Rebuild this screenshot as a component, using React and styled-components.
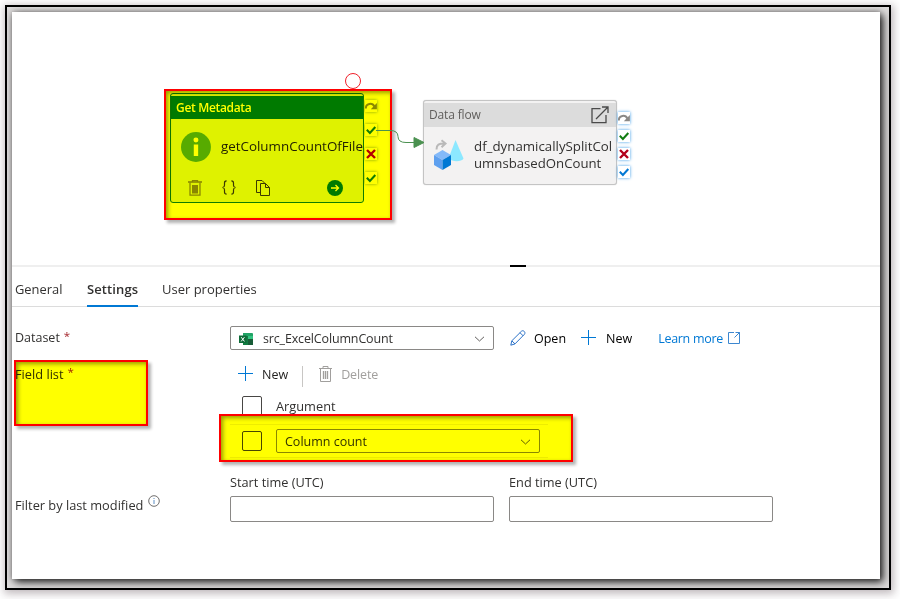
import React from "react";
import styled, { createGlobalStyle, css } from "styled-components";

const Global = createGlobalStyle`
  * { box-sizing: border-box; }
  body { margin: 0; background: #fff; font-family: "Open Sans", "Noto Sans", sans-serif; overflow: hidden; }
`;

const Stage = styled.div`
  width: 900px; height: 599px; padding: 5px 9px 9px 5px; background: #fff;
`;
const Frame = styled.div`
  width: 886px; height: 585px; border: 2px solid #000; padding: 5px; background: #dddbdb;
  box-shadow: 1px 2px 8px 2px rgba(60, 40, 50, .3);
`;
const Page = styled.main`
  position: relative; width: 868px; height: 567px; background: #fff;
  display: flex; flex-direction: column;
  box-shadow: 3px 3px 8px rgba(0, 0, 0, .85), 0 0 5px rgba(0, 0, 0, .3);
`;
const Canvas = styled.section`
  position: relative; height: 253px; flex: none;
`;
const Text = styled.span`
  display: inline-block; white-space: nowrap; flex: none;
  font-size: ${(p) => p.$size || 12.5}px;
  font-weight: ${(p) => p.$weight || 400};
  letter-spacing: ${(p) => p.$ls || 0}px;
  color: ${(p) => p.$color || "#323130"};
  line-height: 18px;
`;
const Node = styled.article`
  position: absolute; border-radius: 3px; width: 194px;
  ${(p) => p.$active
    ? css`left: 158px; top: 81px; height: 110px; border: 1px solid #107c10; background: #dff2df; padding-top: 2px;`
    : css`left: 411px; top: 88px; height: 85px; border: 1px solid #c4c4c4; background: #f3f2f2; padding-top: 2px; box-shadow: 0 0 1px #bbb;`}
`;
const NodeHeader = styled.header`
  height: ${(p) => (p.$active ? 23 : 24)}px; display: flex; align-items: center; justify-content: space-between;
  padding: 0 7px 0 5px; background: ${(p) => (p.$active ? "#007a10" : "#dcdcdc")};
`;
const NodeBody = styled.div`
  display: flex; align-items: center; padding-left: 10px; gap: 10px;
  height: ${(p) => (p.$active ? 55 : 56)}px;
`;
const NodeTitle = styled.div`
  display: flex; flex-direction: column;
  & > span { line-height: 17px; }
`;
const NodeActions = styled.div`
  display: flex; align-items: center; height: 27px; padding: 0 20px 0 17px;
  & > svg + svg { margin-left: 20px; }
  & > svg:last-child { margin-left: auto; }
`;
const Ports = styled.div`
  position: absolute; display: grid; gap: ${(p) => p.$gap}px;
  left: ${(p) => p.$x}px; top: ${(p) => p.$y}px;
`;
const Port = styled.div`
  width: 12px; height: 12px; background: #fff; display: grid; place-items: center;
  box-shadow: 0 0 3px ${(p) => p.$glow};
  svg { display: block; }
`;
const Wire = styled.svg`
  position: absolute; left: 364px; top: 106px;
`;
const Marker = styled.div`
  position: absolute; left: 333px; top: 61px; width: 16px; height: 16px; border: 1px solid #f0202a; border-radius: 50%;
`;
const Highlight = styled.div`
  position: absolute; pointer-events: none;
  left: ${(p) => p.$x}px; top: ${(p) => p.$y}px; width: ${(p) => p.$w}px; height: ${(p) => p.$h}px;
  border: 2px solid #f00; box-shadow: 3px 3px 3px rgba(0, 0, 0, .3);
  &::before {
    content: ""; position: absolute; inset: 0; background: #ff0; mix-blend-mode: multiply;
  }
  &::after {
    content: ""; position: absolute; inset: 0; box-shadow: inset 2px 2px 4px rgba(0, 0, 0, .4);
  }
`;
const Splitter = styled.div`
  height: 2px; background: #efefef; flex: none; padding-left: 498px;
  &::before { content: ""; display: block; width: 16px; height: 2px; background: #000; }
`;
const Tabs = styled.nav`
  height: 40px; flex: none; border-bottom: 1px solid #dcdcdc; display: flex; gap: 24px; padding-left: 3px;
`;
const Tab = styled.div`
  height: 40px; width: ${(p) => p.$w}px; padding-top: 13px; line-height: 18px;
  border-bottom: ${(p) => (p.$on ? "2px solid #0078d4" : "0")};
  & > span { display: block; }
`;
const Form = styled.section`
  display: grid; grid-template-columns: 215px 1fr; padding: 19px 0 0 3px;
  grid-template-rows: 24px 123px 23px 26px;
`;
const Label = styled.div`
  display: flex; align-items: flex-start; gap: ${(p) => p.$gap || 4}px; padding-top: ${(p) => p.$top || 0}px;
  & > svg { margin-top: -1px; }
`;
const Star = styled.span`
  color: #a4262c; font-size: 11.5px; line-height: 14px;
`;
const Line = styled.div`
  display: flex; align-items: center; height: 24px;
`;
const Select = styled.div`
  width: 264px; height: 24px; border: 1px solid #8a8886; border-radius: 2px; display: flex; align-items: center;
  padding: ${(p) => p.$drop || 1}px 8px 0; background: #fff; gap: 10px;
  & > svg:last-child { margin-left: auto; }
`;
const Command = styled.div`
  display: flex; align-items: center; gap: ${(p) => p.$gap}px; margin-left: ${(p) => p.$left}px;
  & > span { margin: 1px 0 -1px; }
`;
const Bar = styled.div`
  width: 1px; height: 21px; background: #c8c6c4; margin: 5px 0 0 14px;
`;
const Table = styled.div`
  width: 318px; padding-top: 12px;
`;
const Row = styled.div`
  display: flex; align-items: center; gap: 14px; padding: ${(p) => p.$top || 0}px 0 0 12px;
  height: ${(p) => p.$h}px; border-bottom: 1px solid #eeedec;
`;
const Check = styled.span`
  width: 20px; height: 20px; border: 1px solid #484644; border-radius: 2px; background: #fff; flex: none;
`;
const Pair = styled.div`
  display: grid; grid-template-columns: 264px 264px; gap: 15px;
`;
const Input = styled.div`
  height: 26px; border: 1px solid #8a8886; border-radius: 2px; background: #fff;
`;

const Chevron = () => (
  <svg width="11" height="6" viewBox="0 0 11 6" fill="none" stroke="#605e5c"><path d="M1 .8 5.5 5 10 .8" /></svg>
);
const Plus = () => (
  <svg width="16" height="16" viewBox="0 0 16 16" fill="#0078d4"><path d="M7 0h1v7h7v1H8v7H7V8H0V7h7z" /></svg>
);
const Trash = ({ color = "#a19f9d" }) => (
  <svg width="13" height="16" viewBox="0 0 13 16" fill="none" stroke={color}>
    <path d="M0 2.500h13M4 2V.5h5V2M1.500 3v12.500h10V3" /><path d="M4.500 5v8M6.500 5v8M8.500 5v8" strokeWidth="1.300" />
  </svg>
);
const TrashBold = () => (
  <svg width="14" height="16" viewBox="0 0 14 16" fill="none" stroke="#8a8700">
    <path d="M0 2h14" strokeWidth="1.600" /><path d="M4.500 2V.6h5V2M2 2.500v12.700h10V2.500" strokeWidth="1.300" />
    <path d="M4 5h6v8.500H4z" fill="#8a8700" stroke="none" />
  </svg>
);
const Tick = ({ color }) => (
  <svg width="12" height="12" viewBox="0 0 12 12" fill="none" stroke={color} strokeWidth="2"><path d="M1.800 5.800l3.100 3.200L10.300 3" /></svg>
);
const Cross = () => (
  <svg width="12" height="12" viewBox="0 0 12 12" fill="none" stroke="#b3001b" strokeWidth="2.400"><path d="M2 2l8 8M10 2L2 10" /></svg>
);
const Redo = () => (
  <svg width="12" height="12" viewBox="0 0 12 12" fill="none" stroke="#8a8886" strokeWidth="2">
    <path d="M.8 8.500C.8 3 7.500 2.500 9.300 6.500" /><path d="M11.900 3v6.200H5.800z" fill="#8a8886" stroke="none" />
  </svg>
);
const InfoDisc = () => (
  <svg width="30" height="30" viewBox="0 0 30 30"><circle cx="15" cy="15" r="15" fill="#57ab00" />
    <circle cx="15" cy="8" r="2.500" fill="#fff" /><path d="M12.800 12.500h4.400V24h-4.400z" fill="#fff" /></svg>
);
const Braces = () => (
  <svg width="14" height="15" viewBox="0 0 14 15" fill="none" stroke="#3b3a39" strokeWidth="1.200">
    <path d="M4.600.8C2.800.8 2.500 1.500 2.500 3v2.200c0 1.400-.5 2.100-2 2.300 1.500.2 2 .9 2 2.300V12c0 1.500.3 2.200 2.100 2.200M9.400.8c1.800 0 2.100.7 2.100 2.200v2.200c0 1.400.5 2.100 2 2.300-1.500.2-2 .9-2 2.300V12c0 1.500-.3 2.200-2.100 2.200" />
  </svg>
);
const Copy = () => (
  <svg width="14" height="16" viewBox="0 0 14 16" fill="none" stroke="#3b3a39">
    <path d="M4 12.500H.5V.5h5.500l2.500 2.500" /><path d="M4.500 3.500h5l4 4v8h-9zM9.500 3.500v4h4" />
  </svg>
);
const GoDisc = () => (
  <svg width="16" height="16" viewBox="0 0 16 16"><circle cx="8" cy="8" r="8" fill="#007a10" />
    <path d="M4 8h7.500M8.500 5l3 3-3 3" stroke="#fff" strokeWidth="1.300" fill="none" /></svg>
);
const PopOut = () => (
  <svg width="18" height="18" viewBox="0 0 18 18" fill="none" stroke="#4a4a4a" strokeWidth="1.300">
    <path d="M9.500 2.700H1v14h14V9" /><path d="M5 13L16.500 1.500M11 1h6v6" />
  </svg>
);
const FlowIcon = () => (
  <svg width="30" height="32" viewBox="0 0 30 32">
    <path d="M21.500 1l8 18.500c-1.500 3.400-11 4-15 0z" fill="#8ce8ff" />
    <path d="M2.500 10.500C2.500 5.500 5 4.500 10 4.500M7.500 1.300l4 3.300-4 3.600" stroke="#b9b9b9" strokeWidth="2" fill="none" />
    <path d="M0 16l8.500-5 8.500 5-8.500 5z" fill="#83b9f9" />
    <path d="M0 16l8.500 5v10L0 26z" fill="#5ea0ef" /><path d="M17 16l-8.500 5v10l8.500-5z" fill="#0078d4" />
  </svg>
);
const Excel = () => (
  <svg width="14" height="12" viewBox="0 0 14 12">
    <path d="M4 0h9a1 1 0 0 1 1 1v10a1 1 0 0 1-1 1H4z" fill="#21a366" />
    <path d="M4 3h5v9H4z" fill="#107c41" /><path d="M9 3h5v3H9z" fill="#33c481" /><path d="M9 6h5v6H9z" fill="#185c37" />
    <path d="M0 2.500h7.500v7.500H0z" fill="#0e6b38" /><path d="M2.200 4.200l3.200 4.200M5.400 4.200L2.200 8.400" stroke="#fff" strokeWidth="1" />
  </svg>
);
const Pencil = () => (
  <svg width="16" height="16" viewBox="0 0 16 16" fill="none" stroke="#2b72c8">
    <path d="M.8 15.200l1-4.400L11.500 1.200c1.700-1.500 4.500 1 3 3L5 13.900zM10 2.700l3.200 3.200M1.800 10.800L5 13.900" />
  </svg>
);
const LinkOut = () => (
  <svg width="12" height="12" viewBox="0 0 12 12" fill="none" stroke="#3c87d0">
    <path d="M6 .5H.5v11h11V.5M6.500 5.500l5-5M7.500.5h4v4" />
  </svg>
);
const InfoRing = () => (
  <svg width="12" height="12" viewBox="0 0 12 12" fill="none" stroke="#605e5c" strokeWidth=".9">
    <circle cx="6" cy="6" r="5.300" /><path d="M6 5v4M6 3v1" stroke="#4a82bd" />
  </svg>
);

export default function App() {
  return (
    <Stage>
      <Global />
      <Frame>
        <Page>
          <Canvas>
            <Node $active>
              <NodeHeader $active><Text $size={12} $weight={600} $color="#fff" $ls={-0.33}>Get Metadata</Text></NodeHeader>
              <NodeBody $active>
                <InfoDisc />
                <NodeTitle><Text $size={13.4} $color="#201f1e">getColumnCountOfFile</Text></NodeTitle>
              </NodeBody>
              <NodeActions><TrashBold /><Braces /><Copy /><GoDisc /></NodeActions>
            </Node>
            <Ports $x={353} $y={88} $gap={12}>
              <Port $glow="#80a060"><Redo /></Port>
              <Port $glow="#80a060"><Tick color="#107c10" /></Port>
              <Port $glow="#80a060"><Cross /></Port>
              <Port $glow="#80a060"><Tick color="#107c10" /></Port>
            </Ports>
            <Node>
              <NodeHeader><Text $size={12} $color="#605e5c" $ls={-0.15}>Data flow</Text><PopOut /></NodeHeader>
              <NodeBody>
                <FlowIcon />
                <NodeTitle>
                  <Text $size={13.3}>df_dynamicallySplitCol</Text>
                  <Text $size={13.2}>umnsbasedOnCount</Text>
                </NodeTitle>
              </NodeBody>
            </Node>
            <Ports $x={606} $y={100} $gap={6}>
              <Port $glow="#3b9be8"><Redo /></Port>
              <Port $glow="#3b9be8"><Tick color="#107c10" /></Port>
              <Port $glow="#3b9be8"><Cross /></Port>
              <Port $glow="#3b9be8"><Tick color="#0078d4" /></Port>
            </Ports>
            <Marker />
          </Canvas>
          <Splitter />
          <Tabs>
            <Tab $w={48}><Text $size={12.9}>General</Text></Tab>
            <Tab $w={51} $on><Text $size={13} $weight={600} $ls={0.1}>Settings</Text></Tab>
            <Tab $w={95}><Text $size={13}>User properties</Text></Tab>
          </Tabs>
          <Form>
            <Label $top={3}><Text>Dataset</Text><Star>*</Star></Label>
            <Line>
              <Select><Excel /><Text $ls={-0.15}>src_ExcelColumnCount</Text><Chevron /></Select>
              <Command $left={16} $gap={8}><Pencil /><Text $color="#000">Open</Text></Command>
              <Command $left={15} $gap={9}><Plus /><Text $color="#000">New</Text></Command>
              <Command $left={26} $gap={5}><Text $color="#0078d4" $ls={-0.3}>Learn more</Text><LinkOut /></Command>
            </Line>
            <Label $top={15}><Text $size={12.8}>Field list</Text><Star>*</Star></Label>
            <Table>
              <Line>
                <Command $left={8} $gap={8}><Plus /><Text $color="#201f1e">New</Text></Command>
                <Bar />
                <Command $left={16} $gap={9}><Trash /><Text $color="#a19f9d" $ls={-0.1}>Delete</Text></Command>
              </Line>
              <Row $h={39} $top={2}><Check /><Text $weight={500} $size={12.8}>Argument</Text></Row>
              <Row $h={33}><Check /><Select $drop={2}><Text>Column count</Text><Chevron /></Select></Row>
            </Table>
            <Label />
            <Pair><Text $size={12.75}>Start time (UTC)</Text><Text $size={12.75}>End time (UTC)</Text></Pair>
            <Label $gap={5}><Text $size={12.8}>Filter by last modified</Text><InfoRing /></Label>
            <Pair><Input /><Input /></Pair>
          </Form>
          <Highlight $x={152} $y={77} $w={228} $h={131} />
          <Highlight $x={2} $y={348} $w={134} $h={66} />
          <Highlight $x={207} $y={402} $w={354} $h={48} />
          <Wire width="49" height="36" viewBox="0 0 49 36" fill="none" stroke="#4b9150">
            <path d="M0 12.500H14q8 0 8 6t8 6H40" /><path d="M38 19.500l10 5-10 5z" fill="#4b9150" />
          </Wire>
        </Page>
      </Frame>
    </Stage>
  );
}
